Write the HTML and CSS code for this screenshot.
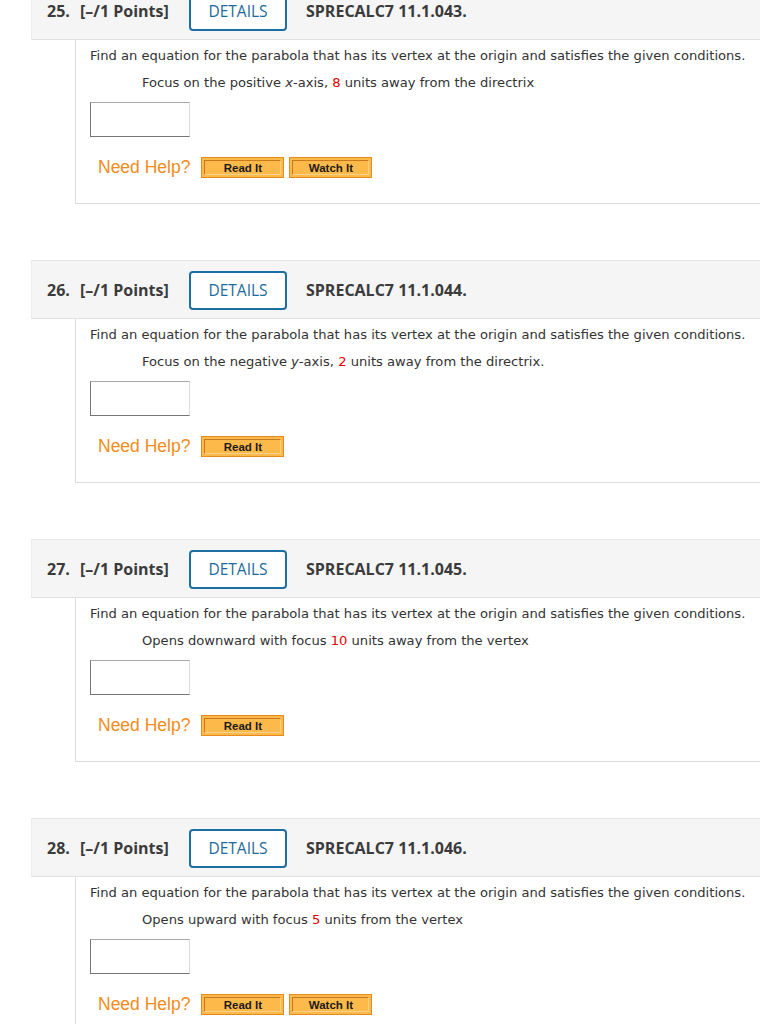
FILE: index.html
```html
<!DOCTYPE html>
<html lang="en">

<head>
    <meta charset="UTF-8">
    <meta name="viewport" content="width=device-width, initial-scale=1.0">
    <title>SPRECALC7 11.1</title>
    <link rel="stylesheet" href="styles.css">
</head>

<body>
    <div class="question first">
        <div class="q-header">
            <span class="q-num">25.</span>
            <span class="q-points">[–/1 Points]</span>
            <button class="details">DETAILS</button>
            <span class="q-code">SPRECALC7 11.1.043.</span>
        </div>
        <div class="q-body">
            <p class="prompt">Find an equation for the parabola that has its vertex at the origin and satisfies the given conditions.</p>
            <p class="condition">Focus on the positive <i>x</i>-axis, <span class="num">8</span> units away from the directrix</p>
            <input type="text" class="answer">
            <div class="help">
                <span class="help-label">Need Help?</span>
                <span class="help-btn"><span>Read It</span></span>
                <span class="help-btn"><span>Watch It</span></span>
            </div>
        </div>
    </div>

    <div class="question">
        <div class="q-header">
            <span class="q-num">26.</span>
            <span class="q-points">[–/1 Points]</span>
            <button class="details">DETAILS</button>
            <span class="q-code">SPRECALC7 11.1.044.</span>
        </div>
        <div class="q-body">
            <p class="prompt">Find an equation for the parabola that has its vertex at the origin and satisfies the given conditions.</p>
            <p class="condition">Focus on the negative <i>y</i>-axis, <span class="num">2</span> units away from the directrix.</p>
            <input type="text" class="answer">
            <div class="help">
                <span class="help-label">Need Help?</span>
                <span class="help-btn"><span>Read It</span></span>
            </div>
        </div>
    </div>

    <div class="question">
        <div class="q-header">
            <span class="q-num">27.</span>
            <span class="q-points">[–/1 Points]</span>
            <button class="details">DETAILS</button>
            <span class="q-code">SPRECALC7 11.1.045.</span>
        </div>
        <div class="q-body">
            <p class="prompt">Find an equation for the parabola that has its vertex at the origin and satisfies the given conditions.</p>
            <p class="condition">Opens downward with focus <span class="num">10</span> units away from the vertex</p>
            <input type="text" class="answer">
            <div class="help">
                <span class="help-label">Need Help?</span>
                <span class="help-btn"><span>Read It</span></span>
            </div>
        </div>
    </div>

    <div class="question">
        <div class="q-header">
            <span class="q-num">28.</span>
            <span class="q-points">[–/1 Points]</span>
            <button class="details">DETAILS</button>
            <span class="q-code">SPRECALC7 11.1.046.</span>
        </div>
        <div class="q-body">
            <p class="prompt">Find an equation for the parabola that has its vertex at the origin and satisfies the given conditions.</p>
            <p class="condition">Opens upward with focus <span class="num">5</span> units from the vertex</p>
            <input type="text" class="answer">
            <div class="help">
                <span class="help-label">Need Help?</span>
                <span class="help-btn"><span>Read It</span></span>
                <span class="help-btn"><span>Watch It</span></span>
            </div>
        </div>
    </div>
</body>

</html>
```

FILE: styles.css
```css
body {
    margin: 0;
    background-color: #fff;
    font-family: "Open Sans", sans-serif;
    color: #333;
}

.question {
    margin: 0 0 56px 31px;
}

/* la primera pregunta está cortada arriba */
.question.first {
    margin-top: -19px;
}

.q-header {
    display: flex;
    align-items: center;
    height: 57px;
    padding-left: 15px;
    background-color: #f5f5f5;
    border-top: 1px solid #e6e6e6;
    border-bottom: 1px solid #e0e0e0;
    border-left: 1px solid #ececec;
    font-size: 16px;
    font-weight: bold;
    color: #3b3b3b;
}

.q-num {
    width: 33px;
}

.q-points {
    width: 109px;
}

.details {
    width: 98px;
    height: 39px;
    margin-top: 1px;
    border: 2px solid #1e6ea2;
    border-radius: 4px;
    background-color: #fff;
    color: #1c6a9d;
    font-family: "Open Sans", sans-serif;
    font-size: 15.5px;
    padding: 0;
    cursor: pointer;
}

.q-code {
    margin-left: 19px;
}

.q-body {
    margin-left: 44px;
    padding: 6px 0 25px 14px;
    border-left: 1px solid #dcdcdc;
    border-bottom: 1px solid #dcdcdc;
    font-family: "DejaVu Sans", Verdana, sans-serif;
    font-size: 13.1px;
    color: #333;
}

.prompt,
.condition {
    margin: 0;
    line-height: 20px;
}

.condition {
    margin-top: 7px;
    padding-left: 52px;
}

.num {
    color: #e00000;
}

.answer {
    display: block;
    box-sizing: border-box;
    width: 100px;
    height: 35px;
    margin-top: 9px;
    border-style: solid;
    border-width: 1px;
    border-color: #a9a9a9 #dcdcdc #767676 #767676;
    background-color: #fff;
}

.help {
    display: flex;
    align-items: center;
    height: 21px;
    margin-top: 20px;
    padding-left: 8px;
}

.help-label {
    font-family: "Liberation Sans", Arial, sans-serif;
    font-size: 17.5px;
    color: #f28c1a;
    margin-right: 11px;
}

.help-btn {
    display: flex;
    box-sizing: border-box;
    width: 83px;
    height: 21px;
    margin-right: 5px;
    padding: 2px;
    border: 1px solid #e98a1f;
    background-color: #fdb94a;
}

.help-btn span {
    flex: 1;
    display: flex;
    align-items: center;
    justify-content: center;
    border-style: solid;
    border-width: 1px;
    border-color: #c9781c #f5d28e #f5d28e #c9781c;
    font-family: "Liberation Sans", Arial, sans-serif;
    font-size: 11.5px;
    font-weight: bold;
    color: #1a1a1a;
}
```
